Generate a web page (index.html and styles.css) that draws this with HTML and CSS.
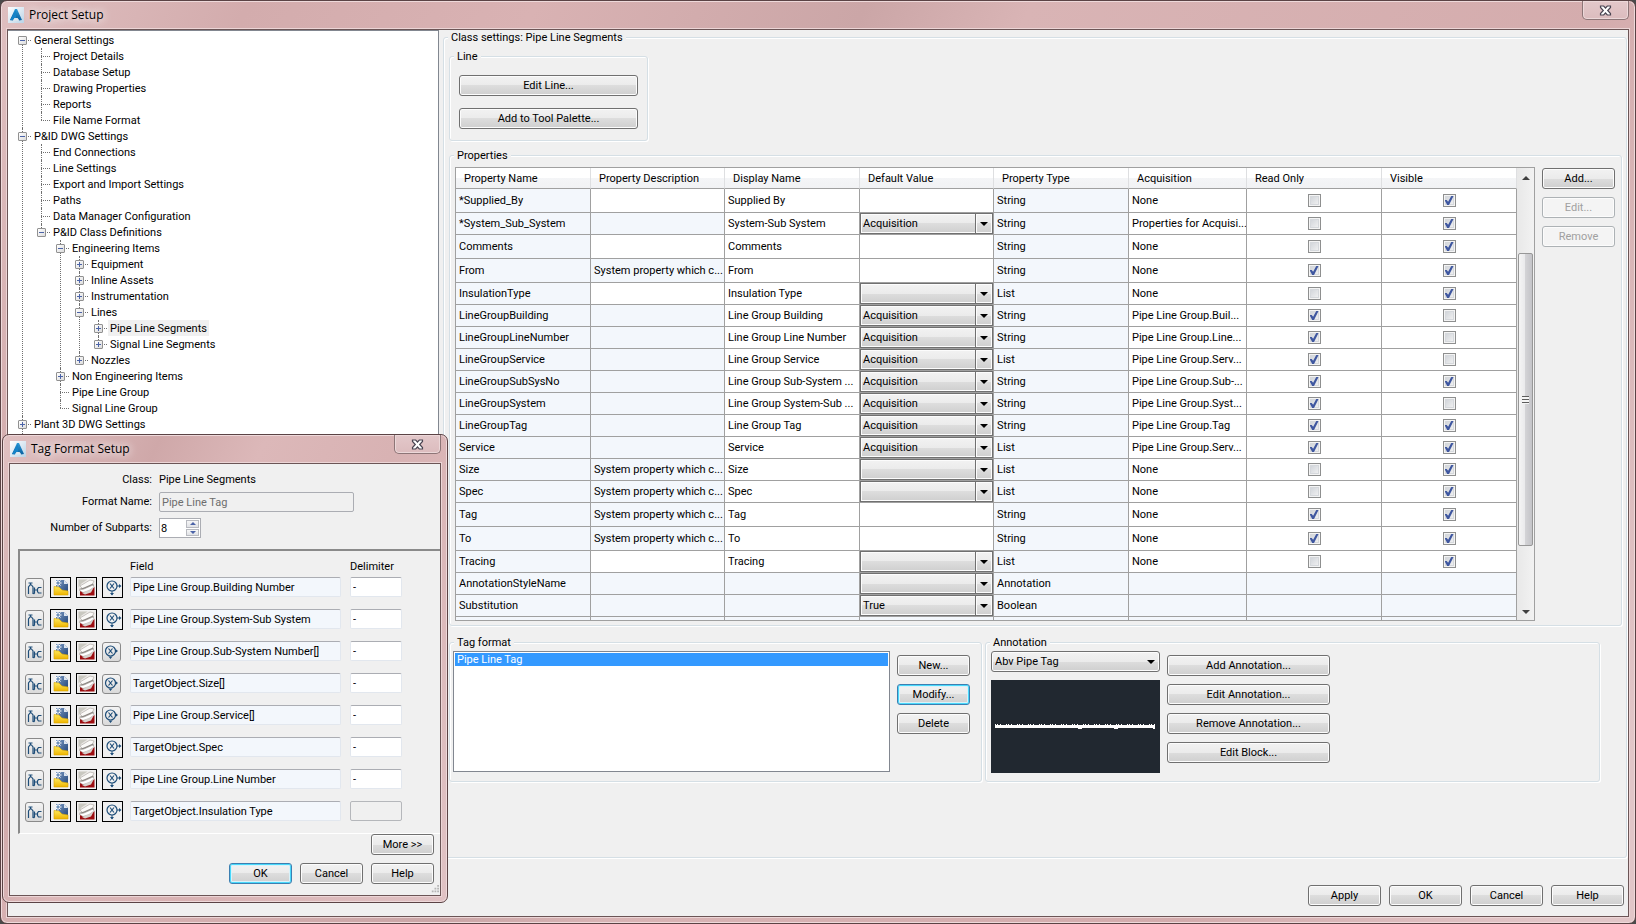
FILE: index.html
```html
<!DOCTYPE html>
<html lang="en">
<head>
    <meta charset="UTF-8">
    <meta name="viewport" content="width=device-width, initial-scale=1.0">
    <title>Project Setup</title>
    <link rel="stylesheet" href="styles.css">
</head>
<body>
    <!-- shared icons -->
    <svg class="sprites" aria-hidden="true">
        <defs>
            <linearGradient id="tile" x1="0" y1="0" x2="1" y2="1">
                <stop offset="0" stop-color="#fff"/>
                <stop offset="1" stop-color="#b9d3e6"/>
            </linearGradient>
            <linearGradient id="blue" x1="0" y1="0" x2="0" y2="1">
                <stop offset="0" stop-color="#2b9ad8"/>
                <stop offset="1" stop-color="#0a5f9e"/>
            </linearGradient>
            <linearGradient id="page" x1="0" y1="0" x2="1" y2="1">
                <stop offset="0" stop-color="#7d9cc4"/>
                <stop offset="1" stop-color="#1c3f74"/>
            </linearGradient>
            <linearGradient id="gold" x1="0" y1="0" x2="0" y2="1">
                <stop offset="0" stop-color="#ffe95a"/>
                <stop offset="1" stop-color="#eeb400"/>
            </linearGradient>
        </defs>
        <symbol id="icon-app" viewBox="0 0 16 16">
            <rect width="16" height="16" fill="url(#tile)"/>
            <path d="M7 2h2l5 11-3 .6-1-2H6l-1 2-3-.6z" fill="url(#blue)"/>
            <path d="M8 3v8H6l-1 2-3 .2z" fill="#1583c8"/>
            <path d="M5 13.500l1.500-2.500h3l1.500 2.500z" fill="#dfe8ee"/>
        </symbol>
        <symbol id="icon-close" viewBox="0 0 13 11">
            <path d="M1.500 1h3.200l1.800 2 1.800-2h3.200v1.500L8.700 5.500l2.800 3V10H8.300L6.500 8l-1.800 2H1.500V8.500l2.800-3-2.800-3z" fill="#fff" stroke="#4a4552" stroke-width="1.200"/>
        </symbol>
        <symbol id="icon-class" viewBox="0 0 17 17">
            <path d="M2.500 14.500V7.500l1.500-2h1.500l1.500 2v7M2.500 3.500h4M4.500 3v2.500M7.500 14.500l1-1V8M8.500 10.500h3M15.500 8h-3l-1 1.500v2.500l1 1.500h3" fill="none" stroke="#1f4e79" stroke-width="1.200"/>
        </symbol>
        <symbol id="icon-drawing" viewBox="0 0 19 19">
            <path d="M5 2h8l4 4v11H5z" fill="url(#page)"/>
            <path d="M13 2v4h4z" fill="#dbe4ef"/>
            <path d="M3 8.500l5 .5 3 3 6 1v4H3z" fill="url(#gold)" stroke="#d9a400" stroke-width=".6"/>
            <path d="M7 1.500v7M3.500 5h7M4.500 2.500l5 5M9.500 2.500l-5 5" stroke="#fff" stroke-width="1"/>
            <circle cx="7" cy="5" r="1.200" fill="#6d90b8"/>
        </symbol>
        <symbol id="icon-project" viewBox="0 0 19 19">
            <rect x="1.500" y="1.500" width="16" height="16" fill="#ece9e6"/>
            <path d="M1.500 1.500h9l-6 4-3 4z" fill="#c9c8c0"/>
            <path d="M17.500 9v8.500H3V13l7 1.500z" fill="#9c0d10"/>
            <path d="M3 8l10-6 4 1-2 4-9 4z" fill="#fbfaf8" stroke="#a8a39e" stroke-width=".6"/>
            <path d="M2 11l5-1.500 9-4 1 2-9 5z" fill="#8a8682"/>
            <path d="M2 12l5-1 9-4 1 2-5 3.500-6 2z" fill="#fff" stroke="#a8a39e" stroke-width=".6"/>
            <path d="M5 15l8-3 4-3-3 5.500-6 2z" fill="#d6d2ce"/>
        </symbol>
        <symbol id="icon-expression" viewBox="0 0 19 19">
            <circle cx="9" cy="8" r="5" fill="none" stroke="#1f4e79" stroke-width="1.200"/>
            <path d="M7 5.500l4 5M11 5.500l-4 5" stroke="#1f4e79" stroke-width="1.200"/>
            <path d="M14 8h3M9 13v4" stroke="#1f4e79" stroke-width="1"/>
            <path d="M16 6l2.500 2-2.500 2zM7 15h4l-2 2.500z" fill="#1f4e79"/>
        </symbol>
        <symbol id="icon-expression-off" viewBox="0 0 17 17">
            <circle cx="7.500" cy="7.500" r="5" fill="none" stroke="#1f4e79" stroke-width="1.200"/>
            <path d="M5.500 5l4 5M9.500 5l-4 5" stroke="#1f4e79" stroke-width="1.200"/>
            <path d="M12.500 5.500l2.500 2-2.500 2zM5.500 13h4l-2 2.500z" fill="#1f4e79"/>
        </symbol>
    </svg>

    <div class="window">
        <header class="titlebar">
            <svg class="app-icon"><use href="#icon-app"/></svg>
            <h1 class="title">Project Setup</h1>
            <button type="button" class="close" aria-label="Close"><svg><use href="#icon-close"/></svg></button>
        </header>

        <main class="client">
            <div class="workspace">
                <nav class="tree" aria-label="Settings">
                    <ul class="root">
                        <li><button class="toggle open" aria-label="Collapse"></button><span>General Settings</span>
                            <ul>
                                <li><span>Project Details</span></li>
                                <li><span>Database Setup</span></li>
                                <li><span>Drawing Properties</span></li>
                                <li><span>Reports</span></li>
                                <li><span>File Name Format</span></li>
                            </ul>
                        </li>
                        <li><button class="toggle open" aria-label="Collapse"></button><span>P&amp;ID DWG Settings</span>
                            <ul>
                                <li><span>End Connections</span></li>
                                <li><span>Line Settings</span></li>
                                <li><span>Export and Import Settings</span></li>
                                <li><span>Paths</span></li>
                                <li><span>Data Manager Configuration</span></li>
                                <li><button class="toggle open" aria-label="Collapse"></button><span>P&amp;ID Class Definitions</span>
                                    <ul>
                                        <li><button class="toggle open" aria-label="Collapse"></button><span>Engineering Items</span>
                                            <ul>
                                                <li><button class="toggle" aria-label="Expand"></button><span>Equipment</span></li>
                                                <li><button class="toggle" aria-label="Expand"></button><span>Inline Assets</span></li>
                                                <li><button class="toggle" aria-label="Expand"></button><span>Instrumentation</span></li>
                                                <li><button class="toggle open" aria-label="Collapse"></button><span>Lines</span>
                                                    <ul>
                                                        <li><button class="toggle" aria-label="Expand"></button><span class="selected">Pipe Line Segments</span></li>
                                                        <li><button class="toggle" aria-label="Expand"></button><span>Signal Line Segments</span></li>
                                                    </ul>
                                                </li>
                                                <li><button class="toggle" aria-label="Expand"></button><span>Nozzles</span></li>
                                            </ul>
                                        </li>
                                        <li><button class="toggle" aria-label="Expand"></button><span>Non Engineering Items</span></li>
                                        <li><span>Pipe Line Group</span></li>
                                        <li><span>Signal Line Group</span></li>
                                    </ul>
                                </li>
                            </ul>
                        </li>
                        <li><button class="toggle" aria-label="Expand"></button><span>Plant 3D DWG Settings</span></li>
                    </ul>
                </nav>

                <fieldset class="class-settings">
                    <legend>Class settings: Pipe Line Segments</legend>

                    <fieldset class="line-group">
                        <legend>Line</legend>
                        <button type="button">Edit Line...</button>
                        <button type="button">Add to Tool Palette...</button>
                    </fieldset>

                    <fieldset class="properties-group">
                        <legend>Properties</legend>
                        <div class="properties-row">
                            <div class="grid-box">
                                <div class="grid-view">
                                    <table class="grid">
                                        <colgroup>
                                            <col class="c-wide"><col class="c-mid"><col class="c-wide"><col class="c-mid">
                                            <col class="c-wide"><col class="c-narrow"><col class="c-wide"><col class="c-wide">
                                        </colgroup>
                                        <thead>
                                            <tr>
                                                <th>Property Name</th>
                                                <th>Property Description</th>
                                                <th>Display Name</th>
                                                <th>Default Value</th>
                                                <th>Property Type</th>
                                                <th>Acquisition</th>
                                                <th>Read Only</th>
                                                <th>Visible</th>
                                            </tr>
                                        </thead>
                                        <tbody id="properties"></tbody>
                                    </table>
                                </div>
                                <div class="scrollbar">
                                    <i class="arrow up"></i>
                                    <div class="thumb"><i class="grip"></i></div>
                                    <i class="arrow down"></i>
                                </div>
                            </div>
                            <div class="stack side-buttons">
                                <button type="button">Add...</button>
                                <button type="button" disabled>Edit...</button>
                                <button type="button" disabled>Remove</button>
                            </div>
                        </div>
                    </fieldset>

                    <div class="bottom-groups">
                        <fieldset class="tag-group">
                            <legend>Tag format</legend>
                            <div class="group-row">
                                <select class="listbox" size="8" aria-label="Tag format">
                                    <option selected>Pipe Line Tag</option>
                                </select>
                                <div class="stack side-buttons">
                                    <button type="button">New...</button>
                                    <button type="button" class="default">Modify...</button>
                                    <button type="button">Delete</button>
                                </div>
                            </div>
                        </fieldset>
                        <fieldset class="annotation-group">
                            <legend>Annotation</legend>
                            <div class="group-row">
                                <div class="annotation-view">
                                    <div class="dropdown">
                                        <select aria-label="Annotation">
                                            <option>Abv Pipe Tag</option>
                                        </select>
                                    </div>
                                    <div class="preview">
                                        <svg viewBox="0 0 160 5" preserveAspectRatio="none">
                                            <rect y="1" width="160" height="3" fill="#fff"/>
                                            <path d="M0 .5h160" stroke="#fff" stroke-dasharray="1 1 1 2 1 5"/>
                                            <path d="M83 4.500h4M119 4.500h4M158 4.500h2" stroke="#fff"/>
                                        </svg>
                                    </div>
                                </div>
                                <div class="stack annotation-buttons">
                                    <button type="button">Add Annotation...</button>
                                    <button type="button">Edit Annotation...</button>
                                    <button type="button">Remove Annotation...</button>
                                    <button type="button">Edit Block...</button>
                                </div>
                            </div>
                        </fieldset>
                    </div>
                </fieldset>
            </div>

            <footer class="footer">
                <button type="button">Apply</button>
                <button type="button">OK</button>
                <button type="button">Cancel</button>
                <button type="button">Help</button>
            </footer>
        </main>
    </div>

    <div class="window dialog" role="dialog" aria-labelledby="dialog-title">
        <header class="titlebar">
            <svg class="app-icon"><use href="#icon-app"/></svg>
            <h2 class="title" id="dialog-title">Tag Format Setup</h2>
            <button type="button" class="close" aria-label="Close"><svg><use href="#icon-close"/></svg></button>
        </header>
        <form class="client">
            <div class="tag-form">
                <span class="label">Class:</span>
                <span>Pipe Line Segments</span>
                <label class="label" for="format-name">Format Name:</label>
                <input id="format-name" type="text" value="Pipe Line Tag" disabled>
                <label class="label" for="subparts">Number of Subparts:</label>
                <div class="spinner">
                    <input id="subparts" type="text" value="8">
                    <div class="spin-buttons">
                        <button type="button" class="spin up" aria-label="Increase"></button>
                        <button type="button" class="spin down" aria-label="Decrease"></button>
                    </div>
                </div>
            </div>
            <div class="parts">
                <div class="part part-head">
                    <span class="head-field">Field</span>
                    <span class="head-delimiter">Delimiter</span>
                </div>
                <div id="parts"></div>
            </div>
            <div class="dialog-buttons">
                <button type="button">More &gt;&gt;</button>
            </div>
            <div class="dialog-buttons">
                <button type="button" class="default">OK</button>
                <button type="button">Cancel</button>
                <button type="button">Help</button>
            </div>
            <svg class="resize" viewBox="0 0 10 10">
                <path d="M8 1h2M5 4h2M8 4h2M2 7h2M5 7h2M8 7h2" stroke="#b5b5b5" stroke-width="2"/>
            </svg>
        </form>
    </div>

    <script src="script.js"></script>
</body>
</html>
```
FILE: styles.css
```css
* {
    box-sizing: border-box;
}

body {
    margin: 0;
    background: #4a4a4a;
    font-family: Roboto, "Liberation Sans", sans-serif;
    font-size: 11px;
    line-height: 14px;
    color: #000;
}

button,
input,
select {
    font: inherit;
    color: inherit;
    margin: 0;
    outline: none;
}

fieldset {
    min-width: 0;
    margin: 0;
    padding: 0;
    border: 1px solid #d5dfe5;
    border-radius: 3px;
    box-shadow: 1px 1px 0 #fff, inset 1px 1px 0 #fff;
}

legend {
    height: 14px;
    margin-left: -1px;
    padding: 0 3px;
    background: #f0f0f0;
    line-height: 16px;
}

.sprites {
    position: absolute;
    width: 0;
    height: 0;
}

/* window frame */

.window {
    display: flex;
    flex-direction: column;
    min-height: 100vh;
    padding: 0 6px 6px;
    border: 1px solid #5b4345;
    border-radius: 7px;
    background: linear-gradient(115deg, #dfbfc0 0, #d3acad 12%, #d9b2b3 26%, #cba6a7 42%, #d9b4b5 50%, #d4acad 78%, #e2c6c8 96%);
    box-shadow: inset 0 0 0 1px #eed9da;
}

.titlebar {
    display: flex;
    align-items: flex-start;
    height: 28px;
}

.app-icon {
    width: 16px;
    height: 16px;
    margin: 6px 0 0 1px;
}

.title {
    flex: 1;
    margin: 4px 0 0;
    padding-left: 5px;
    font-family: "Open Sans", sans-serif;
    font-size: 12px;
    font-weight: normal;
    line-height: 19px;
    text-shadow: 0 0 8px #fff, 0 0 12px #fff;
}

.close {
    display: flex;
    align-items: center;
    justify-content: center;
    width: 47px;
    height: 19px;
    padding: 0;
    border: 1px solid #8d7577;
    border-top: 0;
    border-radius: 0 0 5px 5px;
    background: linear-gradient(#e3c8ca, #dcbcbe);
    box-shadow: inset 0 0 0 1px #ecd8d9;
}

.close svg {
    width: 13px;
    height: 11px;
}

.client {
    position: relative;
    flex: 1;
    display: flex;
    flex-direction: column;
    border: 1px solid #6b5556;
    background: #f0f0f0;
    box-shadow: 0 0 0 1px #ecd5d6;
}

.workspace {
    flex: 1;
    display: flex;
    gap: 4px;
    padding-right: 1px;
}

/* push buttons */

.stack,
.line-group {
    display: flex;
    flex-direction: column;
}

.stack {
    gap: 8px;
}

.stack button,
.line-group button,
.footer button,
.dialog-buttons button {
    height: 21px;
    padding: 0;
    border: 1px solid #707070;
    border-radius: 3px;
    background: linear-gradient(#f2f2f2, #ebebeb 50%, #dddddd 50%, #cfcfcf);
    box-shadow: inset 0 0 0 1px #fcfcfc;
    line-height: 17px;
}

.stack button:disabled {
    border-color: #adb2b5;
    background: #f4f4f4;
    color: #a0a0a0;
}

.stack button.default,
.dialog-buttons button.default {
    border-color: #3c7fb1;
    box-shadow: inset 0 0 0 1px #48d8fb, inset 0 0 0 2px #d8f2fa;
}

.side-buttons {
    width: 73px;
    flex: none;
}

/* tree */

.tree {
    flex: 0 0 431px;
    overflow: hidden;
    border: 1px solid #828790;
    border-left: 0;
    background: #fff;
}

.tree ul {
    margin: 0 0 0 2px;
    padding: 0;
    list-style: none;
}

.tree .root {
    margin: 1px 0 0 7px;
}

.tree li {
    position: relative;
    padding-left: 17px;
}

.tree span {
    display: block;
    width: fit-content;
    height: 16px;
    padding: 0 2px;
    line-height: 18px;
    white-space: nowrap;
}

.tree .selected {
    background: #f0f0f0;
}

.tree li::before {
    content: "";
    position: absolute;
    left: 7px;
    top: 0;
    bottom: 0;
    border-left: 1px dotted #707070;
}

.tree li:last-child::before {
    bottom: auto;
    height: 8px;
}

.tree .root > li:first-child::before {
    top: 8px;
}

.tree .root > li:last-child::before {
    height: 24px;
}

.tree li::after {
    content: "";
    position: absolute;
    left: 7px;
    top: 8px;
    width: 9px;
    border-top: 1px dotted #707070;
}

.toggle {
    position: absolute;
    z-index: 1;
    left: 3px;
    top: 4px;
    width: 9px;
    height: 9px;
    padding: 0;
    border: 1px solid #919191;
    border-radius: 1px;
    background:
        linear-gradient(#4b63a7, #4b63a7) center / 5px 1px no-repeat,
        linear-gradient(#4b63a7, #4b63a7) center / 1px 5px no-repeat,
        linear-gradient(135deg, #fff, #dcdcdc);
}

.toggle.open {
    background:
        linear-gradient(#4b63a7, #4b63a7) center / 5px 1px no-repeat,
        linear-gradient(135deg, #fff, #dcdcdc);
}

/* class settings */

.class-settings {
    flex: 1;
    padding: 5px 4px 0 5px;
}

.line-group {
    width: 199px;
    gap: 12px;
    padding: 12px 9px 11px;
}

.line-group legend {
    margin-left: -5px;
}

.properties-group {
    margin-top: 7px;
    padding: 5px 6px 4px 5px;
}

.properties-row,
.group-row {
    display: flex;
    gap: 7px;
}

.properties-row .side-buttons {
    padding-top: 1px;
}

.grid-box {
    flex: 1;
    display: flex;
    min-width: 0;
    border: 1px solid #a0a0a0;
    background: #fff;
}

.grid-view {
    flex: 1;
    min-width: 0;
}

.grid {
    width: 100%;
    table-layout: fixed;
    border-spacing: 0;
}

.c-wide {
    width: 135px;
}

.c-mid {
    width: 134px;
}

.c-narrow {
    width: 118px;
}

.grid th,
.grid td {
    overflow: hidden;
    white-space: nowrap;
    text-align: left;
    border-right: 1px solid #a0a0a0;
    border-bottom: 1px solid #a0a0a0;
}

.grid th {
    height: 21px;
    padding: 2px 0 0 8px;
    border-right-color: #dedfe1;
    background: linear-gradient(#fff 50%, #f4f5f7 50%, #f1f2f4);
    font-weight: normal;
}

.grid td {
    height: 24px;
    padding: 1px 0 0 3px;
}

.grid .has-combo td {
    height: 22px;
}

.grid .rest td {
    height: 3px;
    border-bottom: 0;
}

.grid .locked {
    background: #f3f7fc;
}

.grid td.tick {
    padding: 0;
}

.grid td.combo {
    position: relative;
    padding: 0;
}

.combo select,
.dropdown select {
    display: block;
    width: 100%;
    height: 21px;
    padding: 1px 18px 0 2px;
    appearance: none;
    border: 1px solid #707070;
    border-radius: 0;
    background: linear-gradient(#f2f2f2, #ebebeb 50%, #dddddd 50%, #cfcfcf);
    box-shadow: inset 0 0 0 1px #fcfcfc;
}

.combo::before {
    content: "";
    position: absolute;
    right: 1px;
    top: 1px;
    bottom: 1px;
    width: 16px;
    border-left: 1px solid #707070;
    box-shadow: inset 1px 0 0 #fcfcfc;
    pointer-events: none;
}

.combo::after,
.dropdown::after {
    content: "";
    position: absolute;
    right: 5px;
    top: 9px;
    border: 4px solid transparent;
    border-top-color: #000;
    border-bottom: 0;
    pointer-events: none;
}

.tick input {
    display: block;
    position: relative;
    width: 13px;
    height: 13px;
    margin: 0 auto;
    appearance: none;
    border: 1px solid #8e8f8f;
    background: linear-gradient(135deg, #cbcfd5, #f6f6f6);
    box-shadow: inset 0 0 0 1px #f4f4f4, inset 0 0 0 2px #d5d8dc;
}

.tick input:checked::before {
    content: "";
    position: absolute;
    left: 1px;
    top: 1px;
    width: 9px;
    height: 9px;
    background: #3f57a0;
    clip-path: polygon(0 45%, 25% 45%, 40% 65%, 75% 0, 100% 0, 50% 100%, 30% 100%);
}

.scrollbar {
    flex: 0 0 17px;
    display: flex;
    flex-direction: column;
    align-items: center;
    padding: 8px 0 6px;
    background: linear-gradient(90deg, #e8e8e8, #f2f2f2);
}

.arrow {
    border: 4px solid transparent;
}

.arrow.up {
    border-top: 0;
    border-bottom-color: #404040;
}

.arrow.down {
    margin-top: auto;
    border-bottom: 0;
    border-top-color: #404040;
}

.thumb {
    display: flex;
    align-items: center;
    justify-content: center;
    width: 15px;
    height: 67%;
    margin-top: 73px;
    border: 1px solid #979797;
    border-radius: 2px;
    background: linear-gradient(90deg, #f5f5f5, #e9e9eb 50%, #d3d3d6 50%, #c4c4c8);
}

.grip {
    width: 7px;
    height: 8px;
    background: repeating-linear-gradient(#5c5c5c 0 1px, #f5f5f5 1px 3px);
}

.bottom-groups {
    display: flex;
    gap: 3px;
    margin: 9px 22px 0 0;
}

.tag-group {
    flex: 1 1 533px;
    padding: 2px 11px 9px 3px;
}

.tag-group legend {
    margin-left: 1px;
}

.annotation-group {
    flex: 1 1 615px;
    padding: 2px 5px 0;
}

.group-row .stack {
    padding-top: 4px;
}

.listbox {
    flex: 1;
    min-width: 0;
    height: 121px;
    padding: 1px;
    border: 1px solid #828790;
    border-radius: 0;
    background: #fff;
    overflow: hidden;
}

.listbox option {
    min-height: 13px;
    padding: 0 2px;
    line-height: 13px;
}

.listbox option:checked {
    background: #39f linear-gradient(#39f, #39f);
    color: #fff;
    -webkit-text-fill-color: #fff;
}

.annotation-view {
    width: 169px;
}

.dropdown {
    position: relative;
}

.dropdown select {
    padding-left: 3px;
    border-radius: 3px;
}

.preview {
    display: flex;
    align-items: center;
    height: 93px;
    margin-top: 8px;
    padding: 0 5px 0 4px;
    background: #212830;
}

.preview svg {
    width: 100%;
    height: 5px;
}

.annotation-buttons {
    width: 163px;
}

.footer {
    display: flex;
    justify-content: flex-end;
    gap: 8px;
    padding: 27px 4px 10px;
}

.footer button {
    width: 73px;
}

/* tag format dialog */

.dialog {
    position: absolute;
    left: 2px;
    top: 434px;
    width: 446px;
    min-height: 0;
    background: linear-gradient(115deg, #e0c0c1 0, #cfa8a9 24%, #dcb8b9 40%, #d8b2b3 60%, #e0c2c4);
}

.tag-form {
    display: grid;
    grid-template-columns: 142px 1fr;
    gap: 5px 7px;
    align-items: center;
    padding-top: 9px;
}

.label {
    text-align: right;
}

.tag-form input {
    width: 195px;
    height: 20px;
    padding: 0 2px;
    border: 1px solid #abadb3;
    border-radius: 2px;
    background: #fff;
}

.tag-form input:disabled {
    background: #f0f0f0;
    color: #6d6d6d;
}

.spinner {
    display: flex;
    width: 42px;
    height: 20px;
    margin-top: 1px;
    border: 1px solid #abadb3;
    background: #fff;
}

.tag-form .spinner input {
    width: 25px;
    height: 18px;
    padding: 0 1px;
    border: 0;
}

.spin-buttons {
    display: flex;
    flex-direction: column;
    gap: 1px;
    padding: 1px;
}

.spin {
    display: flex;
    align-items: center;
    justify-content: center;
    flex: 1;
    width: 13px;
    padding: 0;
    border: 1px solid #b8bac0;
    background: linear-gradient(#f7f7f7, #e0e2e6);
}

.spin::before {
    content: "";
    border: 3px solid transparent;
}

.spin.up::before {
    border-top: 0;
    border-bottom-color: #4b63a7;
}

.spin.down::before {
    border-bottom: 0;
    border-top-color: #4b63a7;
}

.parts {
    margin: 11px 0 0 8px;
    padding-top: 9px;
    border-top: 2px solid #8a8a8a;
    border-left: 2px solid #8a8a8a;
    border-bottom: 1px solid #fff;
}

.part {
    display: grid;
    grid-template-columns: 20px 21px 21px 21px 213px 56px;
    gap: 5px;
    align-items: start;
    height: 21px;
    margin-bottom: 11px;
    padding-left: 5px;
}

.part-head {
    height: 14px;
    margin-bottom: 3px;
}

.head-field {
    grid-column: 5;
    padding-left: 2px;
}

.head-delimiter {
    grid-column: 6;
    padding-left: 4px;
}

.icon-button {
    width: 21px;
    height: 21px;
    padding: 0;
    border: 1px solid #000;
    background: #f0f0f0;
}

.icon-button.soft {
    width: 19px;
    height: 20px;
    margin: 1px 0 0;
    border-color: #8a8a8a;
    border-radius: 3px;
    background: linear-gradient(#f4f4f4, #dadada);
}

.icon-button svg {
    display: block;
    width: 100%;
    height: 100%;
}

.part input {
    width: 211px;
    height: 20px;
    margin-left: 2px;
    padding: 0 2px;
    border: 1px solid #e2e7ee;
    border-top-color: #abadb3;
    border-radius: 2px;
    background: #f3f7fc;
}

.part input.delimiter {
    width: 52px;
    margin-left: 4px;
    background: #fff;
}

.part input.delimiter:disabled {
    border-color: #b5b7bb;
    background: #f0f0f0;
}

.dialog-buttons {
    display: flex;
    justify-content: flex-end;
    gap: 8px;
    margin-bottom: 8px;
    padding-right: 6px;
}

.dialog-buttons button {
    width: 63px;
}

.resize {
    align-self: flex-end;
    width: 9px;
    height: 9px;
    margin: -7px 1px 1px 0;
}
```
FILE: script.js
```js
const SYS = "System property which c...";

// name, description, display name, default value (null = plain cell), type, acquisition, read only, visible
const properties = [
    ["*Supplied_By", "", "Supplied By", null, "String", "None", 0, 1],
    ["*System_Sub_System", null, "System-Sub System", "Acquisition", "String", "Properties for Acquisi...", 0, 1],
    ["Comments", "", "Comments", null, "String", "None", 0, 1],
    ["From", SYS, "From", null, "String", "None", 1, 1],
    ["InsulationType", "", "Insulation Type", "", "List", "None", 0, 1],
    ["LineGroupBuilding", null, "Line Group Building", "Acquisition", "String", "Pipe Line Group.Buil...", 1, 0],
    ["LineGroupLineNumber", null, "Line Group Line Number", "Acquisition", "String", "Pipe Line Group.Line...", 1, 0],
    ["LineGroupService", null, "Line Group Service", "Acquisition", "List", "Pipe Line Group.Serv...", 1, 0],
    ["LineGroupSubSysNo", null, "Line Group Sub-System ...", "Acquisition", "String", "Pipe Line Group.Sub-...", 1, 1],
    ["LineGroupSystem", null, "Line Group System-Sub ...", "Acquisition", "String", "Pipe Line Group.Syst...", 1, 0],
    ["LineGroupTag", null, "Line Group Tag", "Acquisition", "String", "Pipe Line Group.Tag", 1, 1],
    ["Service", null, "Service", "Acquisition", "List", "Pipe Line Group.Serv...", 1, 1],
    ["Size", SYS, "Size", "", "List", "None", 0, 1],
    ["Spec", SYS, "Spec", "", "List", "None", 0, 1],
    ["Tag", SYS, "Tag", null, "String", "None", 1, 1],
    ["To", SYS, "To", null, "String", "None", 1, 1],
    ["Tracing", "", "Tracing", "", "List", "None", 0, 1],
    ["AnnotationStyleName", null, null, "", "Annotation", null, null, null],
    ["Substitution", null, null, "True", "Boolean", null, null, null]
];

function textCell(text, locked) {
    return `<td class="${locked ? "locked" : ""}">${text || ""}</td>`;
}

function tickCell(value, label) {
    if (value === null) return textCell("", true);
    return `<td class="tick"><input type="checkbox" aria-label="${label}"${value ? " checked" : ""}></td>`;
}

function propertyRow([name, desc, display, value, type, acquisition, readOnly, visible]) {
    const combo = value === null
        ? textCell("", false)
        : `<td class="combo"><select aria-label="${name} default value"><option>${value}</option></select></td>`;
    return `<tr class="${value === null ? "" : "has-combo"}">
        ${textCell(name, true)}
        ${textCell(desc, desc !== "")}
        ${textCell(display, display === null)}
        ${combo}
        ${textCell(type, true)}
        ${textCell(acquisition, acquisition === null)}
        ${tickCell(readOnly, name + " read only")}
        ${tickCell(visible, name + " visible")}
    </tr>`;
}

document.getElementById("properties").innerHTML =
    properties.map(propertyRow).join("") +
    `<tr class="rest">${'<td class="locked"></td>'.repeat(8)}</tr>`;

// field, expression button enabled
const parts = [
    ["Pipe Line Group.Building Number", true],
    ["Pipe Line Group.System-Sub System", true],
    ["Pipe Line Group.Sub-System Number[]", false],
    ["TargetObject.Size[]", false],
    ["Pipe Line Group.Service[]", false],
    ["TargetObject.Spec", true],
    ["Pipe Line Group.Line Number", true],
    ["TargetObject.Insulation Type", true]
];

function iconButton(icon, label, soft) {
    return `<button type="button" class="icon-button${soft ? " soft" : ""}" aria-label="${label}"><svg><use href="#${icon}"/></svg></button>`;
}

document.getElementById("parts").innerHTML = parts.map(([field, expression], i) => {
    const last = i === parts.length - 1;
    return `<div class="part">
        ${iconButton("icon-class", "Select class properties", true)}
        ${iconButton("icon-drawing", "Select drawing properties")}
        ${iconButton("icon-project", "Select project properties")}
        ${iconButton(expression ? "icon-expression" : "icon-expression-off", "Define expression", !expression)}
        <input type="text" aria-label="Field ${i + 1}" value="${field}" readonly>
        <input type="text" class="delimiter" aria-label="Delimiter ${i + 1}" value="${last ? "" : "-"}"${last ? " disabled" : ""}>
    </div>`;
}).join("");
```
